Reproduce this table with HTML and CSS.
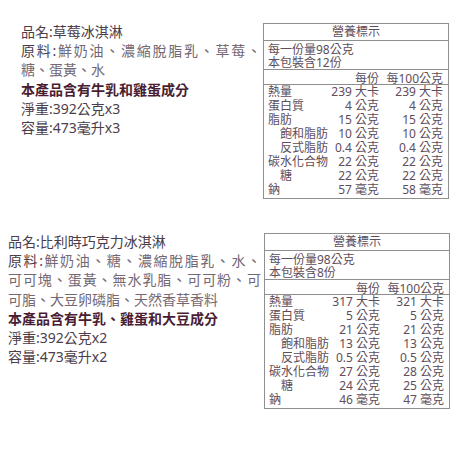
FILE: index.html
```html
<!DOCTYPE html>
<html lang="zh-Hant">
<head>
<meta charset="utf-8">
<link rel="stylesheet" href="styles.css">
</head>
<body>
<div class="page">
  <section class="product product-a">
    <div class="info">
      <p class="row"><span class="lbl">品名:</span>草莓冰淇淋</p>
      <p class="row ingr"><span class="just"><span class="lbl">原料:</span>鮮奶油、濃縮脫脂乳、草莓、</span><span class="plain">糖、蛋黃、水</span></p>
      <p class="row allergy">本產品含有牛乳和雞蛋成分</p>
      <p class="row"><span class="lbl">淨重:</span>392公克x3</p>
      <p class="row"><span class="lbl">容量:</span>473毫升x3</p>
    </div>
    <div class="nutri">
      <div class="n-title">營養標示</div>
      <div class="n-serving"><div>每一份量98公克</div><div>本包裝含12份</div></div>
      <div class="n-head"><span class="n-name"></span><span class="n-v1">每份</span><span class="n-v2">每100公克</span></div>
      <div class="n-body">
        <div class="n-row"><span class="n-name">熱量</span><span class="n-v1">239 大卡</span><span class="n-v2">239 大卡</span></div>
        <div class="n-row"><span class="n-name">蛋白質</span><span class="n-v1">4 公克</span><span class="n-v2">4 公克</span></div>
        <div class="n-row"><span class="n-name">脂肪</span><span class="n-v1">15 公克</span><span class="n-v2">15 公克</span></div>
        <div class="n-row"><span class="n-name sub">飽和脂肪</span><span class="n-v1">10 公克</span><span class="n-v2">10 公克</span></div>
        <div class="n-row"><span class="n-name sub">反式脂肪</span><span class="n-v1">0.4 公克</span><span class="n-v2">0.4 公克</span></div>
        <div class="n-row"><span class="n-name">碳水化合物</span><span class="n-v1">22 公克</span><span class="n-v2">22 公克</span></div>
        <div class="n-row"><span class="n-name sub">糖</span><span class="n-v1">22 公克</span><span class="n-v2">22 公克</span></div>
        <div class="n-row"><span class="n-name">鈉</span><span class="n-v1">57 毫克</span><span class="n-v2">58 毫克</span></div>
      </div>
    </div>
  </section>

  <section class="product product-b">
    <div class="info">
      <p class="row"><span class="lbl">品名:</span>比利時巧克力冰淇淋</p>
      <p class="row ingr"><span class="just"><span class="lbl">原料:</span>鮮奶油、糖、濃縮脫脂乳、水、</span><span class="just">可可塊、蛋黃、無水乳脂、可可粉、可</span><span class="plain">可脂、大豆卵磷脂、天然香草香料</span></p>
      <p class="row allergy">本產品含有牛乳、雞蛋和大豆成分</p>
      <p class="row"><span class="lbl">淨重:</span>392公克x2</p>
      <p class="row"><span class="lbl">容量:</span>473毫升x2</p>
    </div>
    <div class="nutri">
      <div class="n-title">營養標示</div>
      <div class="n-serving"><div>每一份量98公克</div><div>本包裝含8份</div></div>
      <div class="n-head"><span class="n-name"></span><span class="n-v1">每份</span><span class="n-v2">每100公克</span></div>
      <div class="n-body">
        <div class="n-row"><span class="n-name">熱量</span><span class="n-v1">317 大卡</span><span class="n-v2">321 大卡</span></div>
        <div class="n-row"><span class="n-name">蛋白質</span><span class="n-v1">5 公克</span><span class="n-v2">5 公克</span></div>
        <div class="n-row"><span class="n-name">脂肪</span><span class="n-v1">21 公克</span><span class="n-v2">21 公克</span></div>
        <div class="n-row"><span class="n-name sub">飽和脂肪</span><span class="n-v1">13 公克</span><span class="n-v2">13 公克</span></div>
        <div class="n-row"><span class="n-name sub">反式脂肪</span><span class="n-v1">0.5 公克</span><span class="n-v2">0.5 公克</span></div>
        <div class="n-row"><span class="n-name">碳水化合物</span><span class="n-v1">27 公克</span><span class="n-v2">28 公克</span></div>
        <div class="n-row"><span class="n-name sub">糖</span><span class="n-v1">24 公克</span><span class="n-v2">25 公克</span></div>
        <div class="n-row"><span class="n-name">鈉</span><span class="n-v1">46 毫克</span><span class="n-v2">47 毫克</span></div>
      </div>
    </div>
  </section>
</div>
</body>
</html>
```
FILE: styles.css
```css
html, body {
  margin: 0;
  padding: 0;
  background: #ffffff;
}
body {
  font-family: "Noto Sans", "Noto Sans CJK TC", "Noto Sans CJK SC", sans-serif;
  color: #4b3d49;
}
.page {
  padding-top: 22px;
}
.product {
  display: flex;
  align-items: flex-start;
}
.product-b {
  margin-top: 33px;
}
.product-a .info {
  margin-left: 21px;
  width: 240px;
}
.product-a .nutri {
  margin-left: 2px;
}
.product-b .info {
  margin-left: 8px;
  width: 253px;
}
.product-b .nutri {
  margin-left: 3px;
}
.info .row {
  margin: 0;
  font-size: 14px;
  line-height: 19.2px;
  white-space: nowrap;
}
.lbl {
  color: #4b3d49;
}
.ingr {
  color: #736873;
}
.ingr .just {
  display: block;
  text-align: justify;
  text-align-last: justify;
}
.ingr .plain {
  display: block;
}
.allergy {
  font-weight: 700;
  color: #4a1d33;
}
.nutri {
  margin-top: 1px;
  width: 184px;
  border: 1px solid #8f8f8f;
  font-size: 12px;
  line-height: 14px;
  color: #5e4e5b;
}
.n-title {
  height: 16px;
  line-height: 16px;
  text-align: center;
  border-bottom: 1px solid #8f8f8f;
}
.n-serving {
  height: 26px;
  padding: 2px 4px 0 4px;
  line-height: 13px;
  border-bottom: 1px solid #8f8f8f;
}
.n-head {
  display: flex;
  height: 12px;
  padding: 2px 5px 0 4px;
  line-height: 13px;
  border-bottom: 1px solid #8f8f8f;
}
.n-body {
  padding: 0 5px 1px 4px;
}
.n-row {
  display: flex;
  height: 14px;
  line-height: 14px;
}
.n-name {
  flex: 1;
  white-space: nowrap;
}
.n-name.sub {
  padding-left: 12px;
}
.n-v1 {
  width: 50px;
  text-align: right;
  white-space: nowrap;
}
.n-v2 {
  width: 64px;
  text-align: right;
  white-space: nowrap;
}
```
